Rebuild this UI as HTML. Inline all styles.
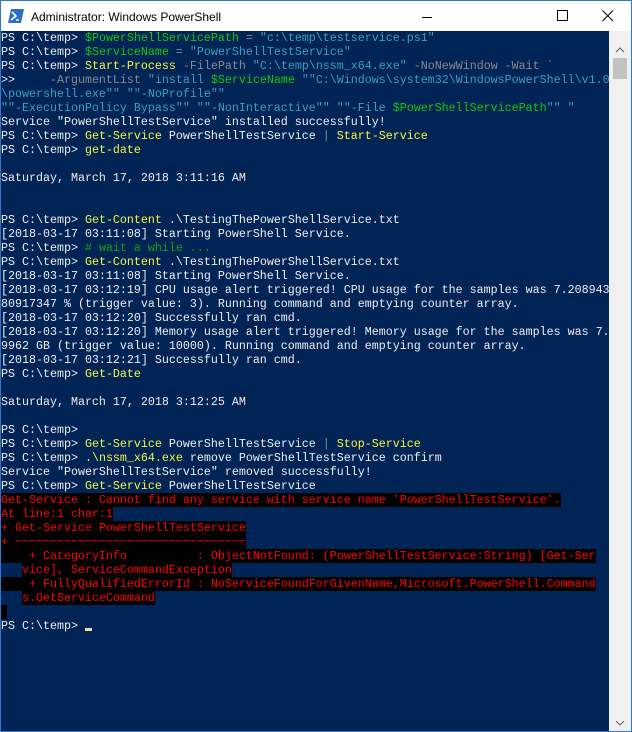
<!DOCTYPE html>
<html><head><meta charset="utf-8"><style>
html,body{margin:0;padding:0;width:632px;height:732px;overflow:hidden;background:#fff;}
.win{position:absolute;left:0;top:0;width:630px;height:730px;border:1px solid #2b79d0;background:#fff;}
.title{position:absolute;left:0;top:0;width:630px;height:30px;background:#fff;font-family:"Liberation Sans",sans-serif;font-size:12px;color:#000;}
.title .t{position:absolute;left:30px;top:9px;}
.console{position:absolute;left:0;top:30px;width:608px;height:700px;background:#012456;font-family:"Liberation Mono",monospace;font-size:11.67px;line-height:14px;color:#eeedf0;white-space:pre;overflow:hidden;}
.l{height:14px;}
.y{color:#f5f543}.g{color:#16c60c}.s{color:#3a9fbf}.p{color:#8a8a8a}.c{color:#13a10e}
.e{color:#ff0000;background:#000;}
.sb{position:absolute;left:608px;top:30px;width:22px;height:700px;background:#f0f0f0;}
.thumb{position:absolute;left:4px;top:27px;width:14px;height:21px;background:#c2c2c2;}
</style></head><body>
<div class="win">
<div class="title">
<svg style="position:absolute;left:7px;top:8px" width="16" height="14" viewBox="0 0 16 14"><path d="M3 0H16L13 14H0Z" fill="#2d6fc8"/><path d="M4 3L8 7L3 11" stroke="#fff" stroke-width="1.6" fill="none"/><path d="M8 11H11" stroke="#fff" stroke-width="1.4"/></svg>
<span class="t">Administrator: Windows PowerShell</span>
<svg style="position:absolute;left:420px;top:10px" width="12" height="12"><path d="M1 6.5H11" stroke="#000" stroke-width="1"/></svg>
<svg style="position:absolute;left:556px;top:9px" width="12" height="12"><rect x="0.5" y="0.5" width="10" height="10" stroke="#000" fill="none"/></svg>
<svg style="position:absolute;left:601px;top:9px" width="12" height="12"><path d="M0.5 0.5L11 11M11 0.5L0.5 11" stroke="#000" stroke-width="1"/></svg>
</div>
<div class="console"><div class="l">PS C:\temp&gt; <span class="g">$PowerShellServicePath</span> <span class="p">=</span> <span class="s">"c:\temp\testservice.ps1"</span></div><div class="l">PS C:\temp&gt; <span class="g">$ServiceName</span> <span class="p">=</span> <span class="s">"PowerShellTestService"</span></div><div class="l">PS C:\temp&gt; <span class="y">Start-Process</span> <span class="p">-FilePath</span> <span class="s">"C:\temp\nssm_x64.exe"</span> <span class="p">-NoNewWindow -Wait `</span></div><div class="l">&gt;&gt;     <span class="p">-ArgumentList</span> <span class="s">"install </span><span class="g">$ServiceName</span><span class="s"> ""C:\Windows\system32\WindowsPowerShell\v1.0</span></div><div class="l"><span class="s">\powershell.exe"" ""-NoProfile""</span></div><div class="l"><span class="s">""-ExecutionPolicy Bypass"" ""-NonInteractive"" ""-File </span><span class="g">$PowerShellServicePath</span><span class="s">"" "</span></div><div class="l">Service "PowerShellTestService" installed successfully!</div><div class="l">PS C:\temp&gt; <span class="y">Get-Service</span> PowerShellTestService <span class="p">|</span> <span class="y">Start-Service</span></div><div class="l">PS C:\temp&gt; <span class="y">get-date</span></div><div class="l"></div><div class="l">Saturday, March 17, 2018 3:11:16 AM</div><div class="l"></div><div class="l"></div><div class="l">PS C:\temp&gt; <span class="y">Get-Content</span> .\TestingThePowerShellService.txt</div><div class="l">[2018-03-17 03:11:08] Starting PowerShell Service.</div><div class="l">PS C:\temp&gt; <span class="c"># wait a while ...</span></div><div class="l">PS C:\temp&gt; <span class="y">Get-Content</span> .\TestingThePowerShellService.txt</div><div class="l">[2018-03-17 03:11:08] Starting PowerShell Service.</div><div class="l">[2018-03-17 03:12:19] CPU usage alert triggered! CPU usage for the samples was 7.208943</div><div class="l">80917347 % (trigger value: 3). Running command and emptying counter array.</div><div class="l">[2018-03-17 03:12:20] Successfully ran cmd.</div><div class="l">[2018-03-17 03:12:20] Memory usage alert triggered! Memory usage for the samples was 7.</div><div class="l">9962 GB (trigger value: 10000). Running command and emptying counter array.</div><div class="l">[2018-03-17 03:12:21] Successfully ran cmd.</div><div class="l">PS C:\temp&gt; <span class="y">Get-Date</span></div><div class="l"></div><div class="l">Saturday, March 17, 2018 3:12:25 AM</div><div class="l"></div><div class="l">PS C:\temp&gt;</div><div class="l">PS C:\temp&gt; <span class="y">Get-Service</span> PowerShellTestService <span class="p">|</span> <span class="y">Stop-Service</span></div><div class="l">PS C:\temp&gt; <span class="y">.\nssm_x64.exe</span> remove PowerShellTestService confirm</div><div class="l">Service "PowerShellTestService" removed successfully!</div><div class="l">PS C:\temp&gt; <span class="y">Get-Service</span> PowerShellTestService</div><div class="l"><span class="e">Get-Service : Cannot find any service with service name 'PowerShellTestService'.</span></div><div class="l"><span class="e">At line:1 char:1</span></div><div class="l"><span class="e">+ Get-Service PowerShellTestService</span></div><div class="l"><span class="e">+ ~~~~~~~~~~~~~~~~~~~~~~~~~~~~~~~~~</span></div><div class="l"><span class="e">    + CategoryInfo          : ObjectNotFound: (PowerShellTestService:String) [Get-Ser</span></div><div class="l">   <span class="e">vice], ServiceCommandException</span></div><div class="l"><span class="e">    + FullyQualifiedErrorId : NoServiceFoundForGivenName,Microsoft.PowerShell.Command</span></div><div class="l">   <span class="e">s.GetServiceCommand</span></div><div class="l"><span style="display:inline-block;width:6px;height:14px;background:#000;vertical-align:top"></span></div><div class="l">PS C:\temp&gt; <span style="display:inline-block;width:7px;height:3px;background:#f7d9a8;vertical-align:-2px"></span></div></div>
<div class="sb"><div class="thumb"></div>
<svg style="position:absolute;left:6px;top:15px" width="10" height="8"><path d="M1 6L5 2L9 6" stroke="#606060" fill="none"/></svg>
<svg style="position:absolute;left:6px;top:688px" width="10" height="8"><path d="M1 2L5 6L9 2" stroke="#606060" fill="none"/></svg>
</div>
</div>
</body></html>
